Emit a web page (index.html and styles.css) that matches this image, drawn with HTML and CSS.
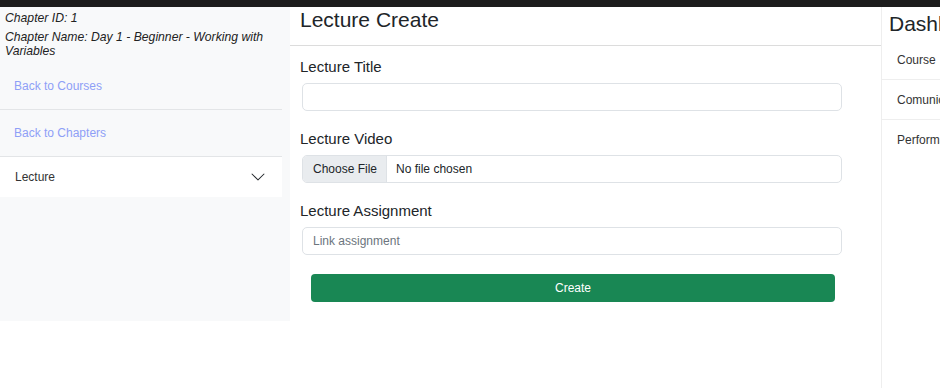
FILE: index.html
```html
<!DOCTYPE html>
<html lang="en">
<head>
<meta charset="utf-8">
<title>Lecture Create</title>
<link rel="stylesheet" href="styles.css">
</head>
<body>
<div class="topbar"></div>
<div class="page">
  <aside class="sidebar">
    <p class="meta">Chapter ID: 1</p>
    <p class="meta">Chapter Name: Day 1 - Beginner - Working with Variables</p>
    <ul class="nav-list">
      <li class="nav-item"><a href="#" class="nav-link">Back to Courses</a></li>
      <li class="nav-item"><a href="#" class="nav-link">Back to Chapters</a></li>
      <li class="nav-item nav-item-active">
        <span class="nav-text">Lecture</span>
        <svg class="chevron" width="16" height="16" viewBox="0 0 16 16" aria-hidden="true"><path fill="#212529" fill-rule="evenodd" d="M1.646 4.646a.5.5 0 0 1 .708 0L8 10.293l5.646-5.647a.5.5 0 0 1 .708.708l-6 6a.5.5 0 0 1-.708 0l-6-6a.5.5 0 0 1 0-.708z"/></svg>
      </li>
    </ul>
  </aside>
  <main class="main">
    <h1 class="title">Lecture Create</h1>
    <hr class="divider">
    <form class="form">
      <div class="group">
        <label class="label">Lecture Title</label>
        <div class="input"></div>
      </div>
      <div class="group">
        <label class="label">Lecture Video</label>
        <div class="input file-input"><span class="file-btn">Choose File</span><span class="file-name">No file chosen</span></div>
      </div>
      <div class="group">
        <label class="label">Lecture Assignment</label>
        <div class="input"><span class="placeholder">Link assignment</span></div>
      </div>
      <div class="actions">
        <button type="button" class="btn-create">Create</button>
      </div>
    </form>
  </main>
  <aside class="right">
    <h2 class="right-title">Dashboard</h2>
    <ul class="right-list">
      <li class="right-item">Course</li>
      <li class="right-item">Comunication</li>
      <li class="right-item">Performance</li>
    </ul>
  </aside>
</div>
</body>
</html>
```

FILE: styles.css
```css
* { box-sizing: border-box; }
html, body { margin: 0; padding: 0; }
body {
  font-family: "Liberation Sans", Arial, sans-serif;
  color: #212529;
  background: #fff;
  width: 940px;
  height: 388px;
  overflow: hidden;
}
.topbar { height: 7px; background: #1c1c1c; }
.page {
  display: grid;
  grid-template-columns: 290px 591px 220px;
  height: 381px;
}
.sidebar {
  background: #f8f9fa;
  height: 314px;
  padding-top: 4px;
}
.meta {
  margin: 0 0 5px 0;
  padding-left: 5px;
  font-size: 12.2px;
  line-height: 14px;
  font-style: italic;
  color: #222;
}
.nav-list { list-style: none; margin: 0; padding: 0; width: 282px; }
.nav-item {
  border-bottom: 1px solid #e3e5e7;
  height: 47px;
  display: flex;
  align-items: center;
  padding-left: 14px;
}
.nav-link {
  font-size: 12px;
  color: #8e9ff7;
  text-decoration: none;
}
.nav-item-active {
  background: #fff;
  border-bottom: none;
  height: 40px;
  justify-content: space-between;
  padding-left: 15px;
  padding-right: 16px;
}
.nav-text { font-size: 12px; color: #333; }
.chevron { display: block; }
.main { padding-top: 1px; }
.title {
  margin: 0 0 13px 10px;
  font-size: 21px;
  line-height: 24px;
  font-weight: 400;
  color: #212529;
}
.divider {
  margin: 0;
  border: 0;
  border-top: 1px solid #dcdcdc;
}
.form { padding: 12px 39px 0 10px; }
.group { margin-bottom: 19px; }
.label {
  display: block;
  font-size: 15px;
  line-height: 18px;
  margin-bottom: 7px;
  color: #212529;
}
.input {
  margin-left: 2px;
  height: 28px;
  border: 1px solid #dee2e6;
  border-radius: 5px;
  background: #fff;
  display: flex;
  align-items: center;
  padding-left: 10px;
  font-size: 12px;
  overflow: hidden;
}
.placeholder { color: #6c757d; }
.file-input { padding-left: 0; }
.file-btn {
  height: 100%;
  display: flex;
  align-items: center;
  padding: 0 9px 0 10px;
  background: #e9ecef;
  border-right: 1px solid #dee2e6;
  color: #212529;
}
.file-name { padding-left: 9px; color: #212529; }
.actions { padding: 0 7px 0 11px; }
.btn-create {
  display: block;
  width: 100%;
  height: 28px;
  border: 0;
  border-radius: 4px;
  background: #198754;
  color: #fff;
  font-family: "Liberation Sans", Arial, sans-serif;
  font-size: 12px;
  padding: 0;
}
.right { border-left: 1px solid #eeeeee; }
.right-title {
  margin: 0;
  padding: 5px 0 0 7px;
  height: 33px;
  font-size: 21px;
  line-height: 24px;
  font-weight: 400;
  color: #212529;
  white-space: nowrap;
}
.right-list { list-style: none; margin: 0; padding: 0; }
.right-item {
  height: 40px;
  border-bottom: 1px solid #eeeeee;
  display: flex;
  align-items: center;
  padding-left: 15px;
  font-size: 12px;
  color: #333;
}
.right-item:last-child { border-bottom: none; }
```
